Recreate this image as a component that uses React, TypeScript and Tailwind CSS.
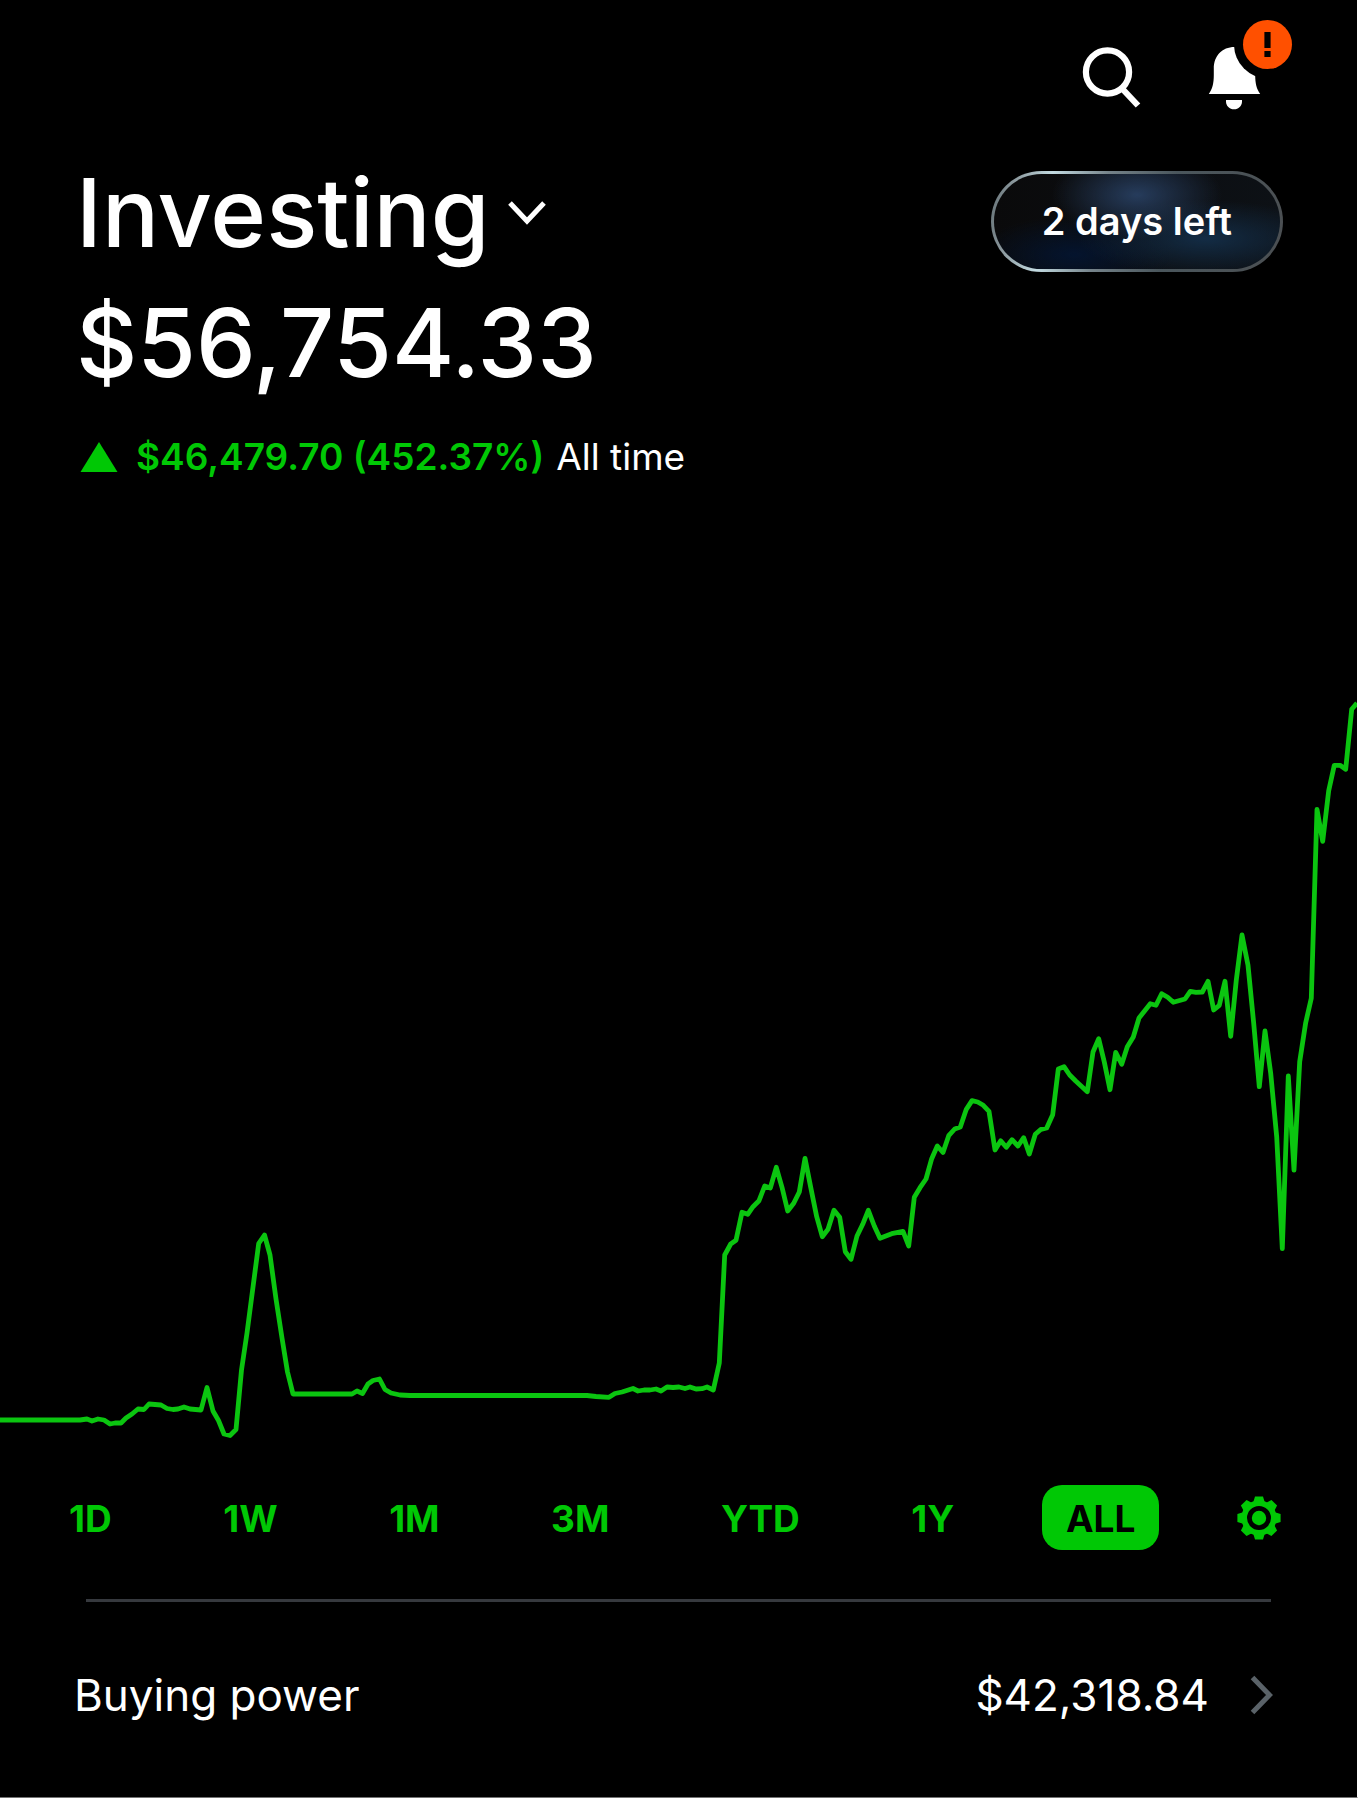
const CHART_POINTS: [number, number][] = [
  [0, 1420], [80, 1420], [87, 1419], [92, 1421], [98, 1419], [104, 1420], [110, 1424], [115, 1423], [121, 1423],
  [126, 1418], [132, 1414], [138, 1409], [144, 1409.5], [149, 1404], [161, 1405], [167, 1408.5], [173, 1409.5],
  [178, 1409], [184, 1407], [190, 1409], [201, 1410], [207, 1387.5], [213, 1411], [218.5, 1420.5], [224, 1434],
  [230, 1435.5], [236, 1429.5], [241.5, 1370], [247, 1333], [253, 1287], [258.7, 1243.5], [264.5, 1235],
  [270, 1255], [276, 1299], [282, 1338], [287.5, 1372], [293, 1394], [352, 1394], [357, 1391], [362.5, 1393.5],
  [368, 1384], [373, 1380.5], [379.5, 1379], [385, 1389.5], [391, 1393], [400, 1395], [410, 1395.5], [587, 1395.5],
  [596, 1396.5], [609, 1397.3], [615, 1393.5], [622, 1392], [633, 1388.5], [638, 1391], [644, 1390], [650, 1390],
  [656, 1389], [661, 1391], [667, 1387], [673, 1387.5], [679, 1387], [685, 1388.5], [690, 1387], [696, 1389],
  [702, 1388.7], [707, 1387], [713.3, 1390], [719.3, 1363], [724.7, 1255], [730.7, 1244], [736, 1240.3],
  [742, 1212.3], [747.7, 1214.3], [753, 1206.7], [759, 1200.7], [764.7, 1186], [770.3, 1188], [776.3, 1167.3],
  [782, 1187.3], [787.7, 1211], [793.7, 1203.3], [799.3, 1192], [805, 1158.3], [810.7, 1187.3], [816.7, 1216.7],
  [822.3, 1236.7], [828, 1229.3], [834, 1210.3], [839.7, 1217.3], [845.3, 1251.7], [851, 1259.3], [857, 1236],
  [862.7, 1224.3], [868.3, 1210.3], [874.3, 1226], [880, 1238.3], [891.7, 1233.7], [903, 1231.3], [908.7, 1246],
  [914.3, 1197.3], [920, 1187.7], [926, 1179], [931.7, 1158.7], [937.3, 1146], [943, 1152.5], [948.7, 1135.7],
  [954.7, 1129], [960.3, 1127], [966.3, 1109.3], [972, 1100.7], [977.7, 1102], [983.3, 1105.3], [989, 1111.3],
  [995, 1150], [1000.7, 1140.7], [1006.3, 1147.3], [1012, 1139.7], [1018, 1146], [1023.7, 1137.7],
  [1029.3, 1154], [1035.3, 1134.3], [1041, 1129.3], [1046.7, 1128], [1052.7, 1114.7], [1058.3, 1069],
  [1064, 1066.7], [1069.7, 1075], [1075.7, 1081], [1087.3, 1091.7], [1093, 1052], [1098.7, 1038.7],
  [1104.3, 1062], [1110, 1089.7], [1115.7, 1052.3], [1121.7, 1064.3], [1127.3, 1046.7], [1133.3, 1037],
  [1139, 1018], [1150.3, 1003.7], [1156, 1005.3], [1161.7, 993.7], [1167.7, 997.3], [1173.3, 1002.3],
  [1185, 999], [1190.3, 991.3], [1196, 992.3], [1202.3, 992], [1208, 981.3], [1213.7, 1010], [1219.3, 1005.3],
  [1225, 981.3], [1230.7, 1036.3], [1236.3, 980], [1242, 935], [1248, 965.3], [1253.7, 1023.3], [1259.3, 1086.7],
  [1265, 1031], [1270.7, 1073.3], [1276.7, 1136.7], [1282.3, 1248.7], [1288.3, 1076], [1294, 1170],
  [1299.7, 1061.7], [1305.7, 1022.7], [1311.3, 998.3], [1317, 809.3], [1322.7, 841.3], [1328.7, 790.7],
  [1334.3, 765.3], [1340, 765.3], [1345.7, 769.3], [1351.7, 709.3], [1357, 703],
];

const RANGES = ["1D", "1W", "1M", "3M", "YTD", "1Y", "ALL"];

function SearchIcon() {
  return (
    <svg viewBox="0 0 60 64" className="h-16 w-[60px]" fill="none" stroke="white" aria-hidden="true">
      <circle cx="26.5" cy="26" r="21.6" strokeWidth="6.2" />
      <path d="M41 42.500 57 59.500" strokeWidth="6.2" />
    </svg>
  );
}

function BellIcon() {
  return (
    <svg viewBox="1208 46 54 64" className="h-16 w-[54px]" aria-hidden="true">
      <defs>
        <mask id="badge-gap" maskUnits="userSpaceOnUse" x="1200" y="40" width="80" height="80">
          <rect x="1200" y="40" width="80" height="80" fill="white" />
          <circle cx="1268" cy="44.5" r="34" fill="black" />
        </mask>
      </defs>
      <g fill="white" mask="url(#badge-gap)">
        <path d="M1234.5 47C1222 47 1213.8 56 1213.8 68.5V75C1213.8 83 1212.5 89 1208.8 94H1260.2C1256.5 89 1255.2 83 1255.2 75V68.5C1255.2 56 1247 47 1234.5 47Z" />
        <path d="M1226 100H1242V101.5C1242 106 1238.5 109.3 1234 109.3C1229.5 109.3 1226 106 1226 101.5Z" />
      </g>
    </svg>
  );
}

function GearIcon() {
  const teeth = [0, 45, 90, 135, 180, 225, 270, 315];
  return (
    <svg viewBox="-22 -22 44 44" className="size-11" aria-hidden="true">
      <g fill="#00c805">
        {teeth.map((angle) => (
          <path key={angle} d="M-6 -15 -4 -21.6H4L6 -15Z" transform={`rotate(${angle})`} />
        ))}
      </g>
      <circle r="14.8" fill="none" stroke="#00c805" strokeWidth="5.6" />
      <circle r="7.2" fill="#00c805" />
    </svg>
  );
}

export default function App() {
  return (
    <main className="min-h-screen border-r border-b border-r-white border-b-neutral-500 bg-black font-['Inter',sans-serif] text-white">
      <header className="flex justify-end gap-[67px] pt-[46px] pr-[95px] pl-[76px]">
        <button type="button" aria-label="Search" className="h-16">
          <SearchIcon />
        </button>
        <button type="button" aria-label="Notifications" className="relative h-16">
          <BellIcon />
          <span className="absolute -top-[26px] -right-[30px] flex size-[49px] items-center justify-center rounded-full bg-[#ff5000]">
            <svg viewBox="0 0 7 25" className="h-[25px] w-[7px]" aria-hidden="true">
              <path d="M.4 0H6.6V16H.4ZM.4 19H6.6V25H.4Z" fill="black" />
            </svg>
          </span>
        </button>
      </header>

      <section className="flex items-start justify-between pt-[55px] pr-[74px] pl-[76px]">
        <div>
          <h1 className="text-[95px] leading-[96px] font-medium">
            <button type="button" className="flex items-center gap-[18px]">
              Investing
              <svg viewBox="0 0 38 24" className="h-6 w-[38px]" fill="none" stroke="white" strokeWidth="5" aria-hidden="true">
                <path d="M2 2 19 20 36 2" />
              </svg>
            </button>
          </h1>
          <p className="mt-[34px] text-[95px] leading-[96px] font-medium">$56,754.33</p>
          <p className="mt-[42px] flex items-center text-[37px] leading-[48px]">
            <svg viewBox="0 0 38 30" className="mr-[18px] ml-1 h-[30px] w-[38px]" aria-hidden="true">
              <path d="M19 0 37.5 30H.5Z" fill="#00c805" />
            </svg>
            <span className="font-semibold text-[#00c805]">$46,479.70 (452.37%)</span>
            <span className="ml-3">All time</span>
          </p>
        </div>
        <button
          type="button"
          className="mt-1.5 rounded-full bg-[linear-gradient(100deg,#5f6b70_0%,#8b989d_8%,#c3dbe2_20%,#75838a_38%,#4a565c_60%,#4b4f52_100%)] p-[3px]"
        >
          <span className="block rounded-full bg-[radial-gradient(ellipse_at_50%_22%,#263c5c_0%,transparent_42%),radial-gradient(ellipse_at_74%_68%,#132c45_0%,transparent_42%),radial-gradient(ellipse_at_28%_85%,#04142e_0%,transparent_34%),linear-gradient(90deg,#0a0a0b,#0d1116)] px-12 py-6 text-[38px] leading-[47px] font-semibold">
            2 days left
          </span>
        </button>
      </section>

      <svg viewBox="0 690 1357 760" className="mt-[209px] w-full" role="img" aria-label="Portfolio value, all time">
        <polyline
          points={CHART_POINTS.map(([x, y]) => `${x},${y}`).join(" ")}
          fill="none"
          stroke="#0bc510"
          strokeWidth="4.8"
          strokeLinejoin="round"
        />
      </svg>

      <nav aria-label="Time range" className="mt-[35px] flex items-center justify-between pr-[62px] pl-[45px]">
        {RANGES.map((range) => (
          <button
            key={range}
            type="button"
            aria-pressed={range === "ALL"}
            className="rounded-[20px] px-6 pt-[9px] pb-[7px] text-[37px] leading-[49px] font-bold text-[#00c805] aria-pressed:bg-[#00c805] aria-pressed:text-black"
          >
            {range}
          </button>
        ))}
        <button type="button" aria-label="Chart settings" className="px-3.5">
          <GearIcon />
        </button>
      </nav>

      <hr className="mt-[49px] mr-[86px] ml-[86px] border-t-3 border-[#36393e]" />

      <a href="#buying-power" className="mt-[65px] flex items-center pr-[84px] pl-[74px] text-[44px] leading-[56px]">
        <span>Buying power</span>
        <span className="mr-[41px] ml-auto">$42,318.84</span>
        <svg viewBox="0 0 23 40" className="h-10 w-[23px]" fill="none" stroke="#5a6268" strokeWidth="5" aria-hidden="true">
          <path d="M2.5 2.5 19.5 20 2.5 37.5" />
        </svg>
      </a>
    </main>
  );
}
